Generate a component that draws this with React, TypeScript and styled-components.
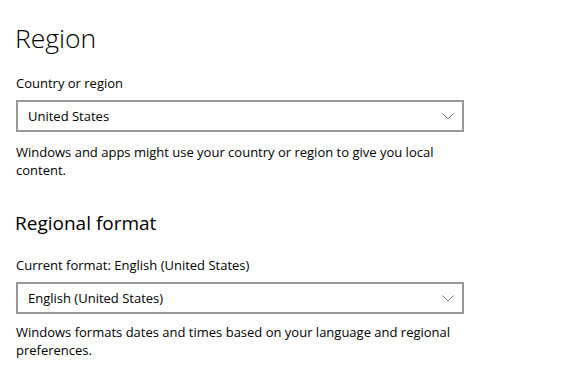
import React from "react";
import styled, { createGlobalStyle } from "styled-components";

const GlobalStyle = createGlobalStyle`
  html, body {
    margin: 0;
    padding: 0;
    background: #ffffff;
  }
  body {
    font-family: "Open Sans", "Noto Sans", "Liberation Sans", sans-serif;
    color: #000000;
  }
`;

const Page = styled.div`
  width: 577px;
  height: 375px;
  overflow: hidden;
  box-sizing: border-box;
  padding: 18px 0 0 16px;
  display: flex;
  flex-direction: column;
`;

const Title = styled.h1`
  margin: 0 0 15px -1px;
  font-size: 26.5px;
  font-weight: 300;
  line-height: 40px;
`;

const SectionTitle = styled.h2`
  margin: 30px 0 18px -1px;
  font-size: 19px;
  font-weight: 400;
  line-height: 28px;
`;

const Label = styled.div`
  font-size: 13px;
  line-height: 20px;
  margin-bottom: 7px;
`;

const Select = styled.div`
  width: 448px;
  height: 32px;
  box-sizing: border-box;
  border: 2px solid #999999;
  padding: 0 8px 0 10px;
  display: flex;
  align-items: center;
  justify-content: space-between;
  font-size: 13px;
  line-height: 20px;
`;

const Description = styled.p<{ $gap: number }>`
  margin: ${p => p.$gap}px 0 0;
  max-width: 462px;
  font-size: 13px;
  line-height: 18px;
`;

const Chevron = () => (
  <svg width="12" height="7" viewBox="0 0 12 7" fill="none">
    <polyline points="0.5,0.5 6,6 11.5,0.5" stroke="#767676" strokeWidth="1" />
  </svg>
);

interface FieldProps {
  label: string;
  value: string;
}

const Field = ({ label, value }: FieldProps): JSX.Element => (
  <>
    <Label>{label}</Label>
    <Select>
      <span>{value}</span>
      <Chevron />
    </Select>
  </>
);

export default function App(): JSX.Element {
  return (
    <>
      <GlobalStyle />
      <Page>
        <Title>Region</Title>
        <Field label="Country or region" value="United States" />
        <Description $gap={11}>
          Windows and apps might use your country or region to give you local
          content.
        </Description>
        <SectionTitle>Regional format</SectionTitle>
        <Field label="Current format: English (United States)" value="English (United States)" />
        <Description $gap={9}>
          Windows formats dates and times based on your language and regional
          preferences.
        </Description>
      </Page>
    </>
  );
}
